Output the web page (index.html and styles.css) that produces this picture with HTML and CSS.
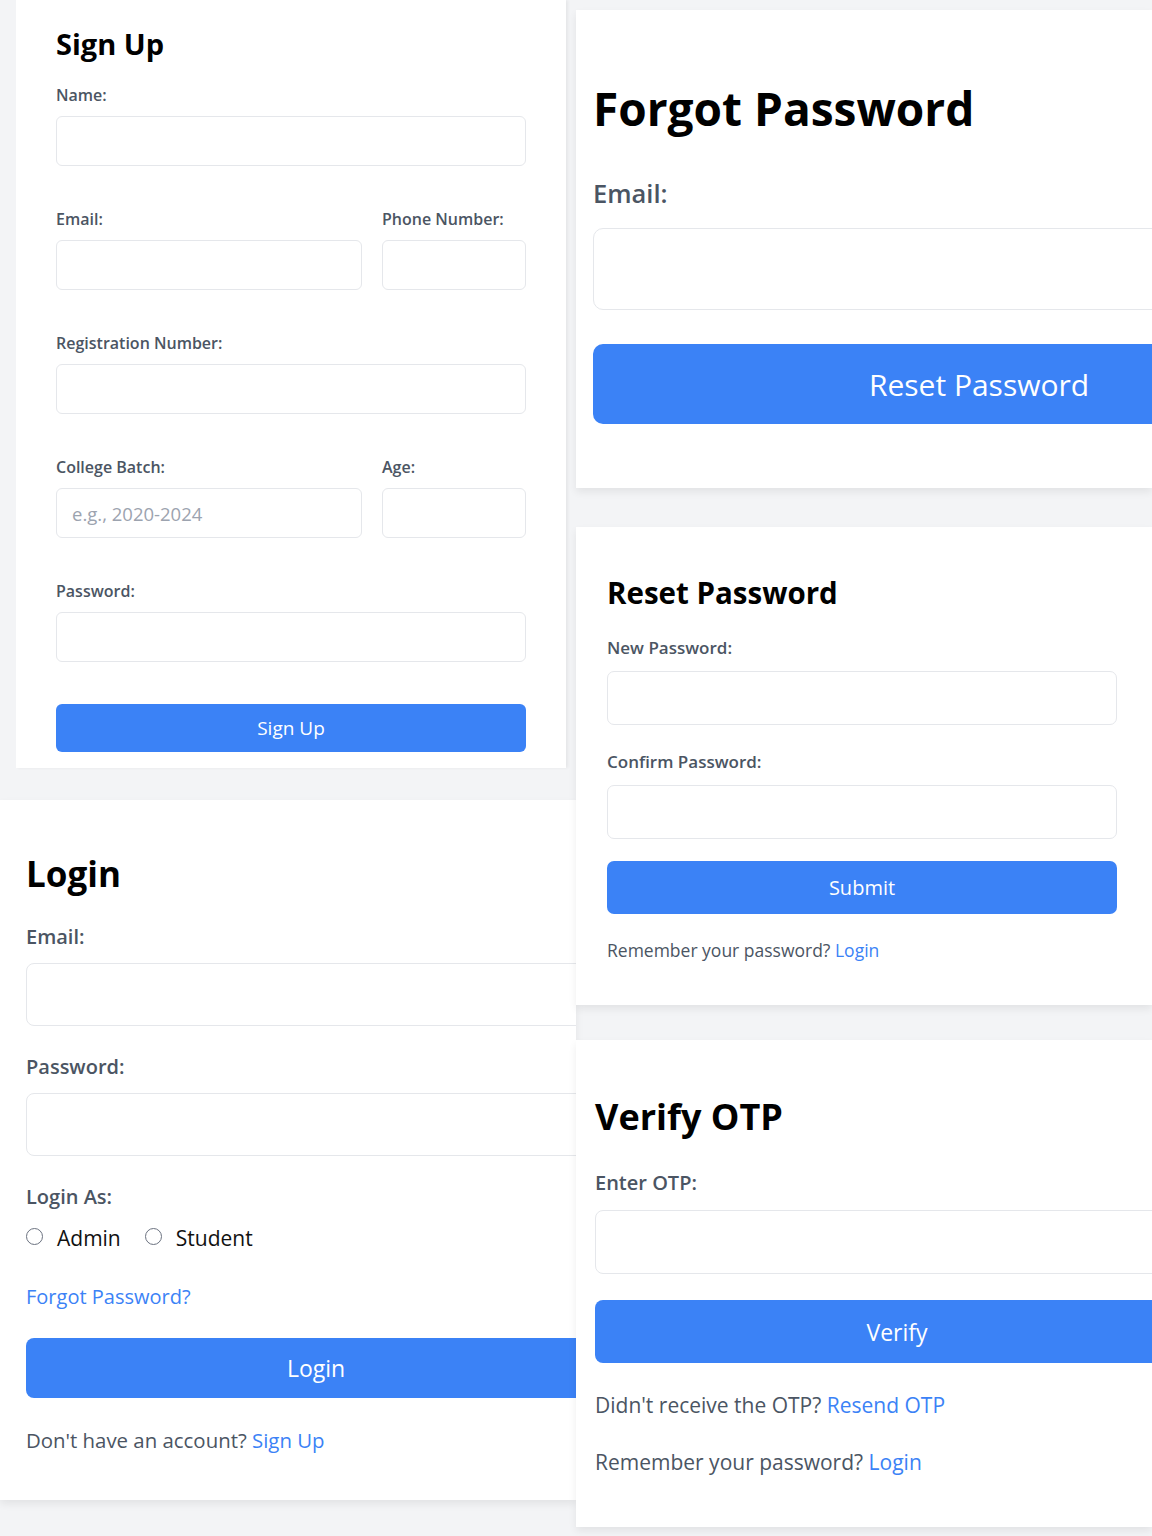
FILE: index.html
```html
<!DOCTYPE html>
<html lang="en">
<head>
<meta charset="utf-8">
<title>Auth screens</title>
<link rel="stylesheet" href="styles.css">
</head>
<body>
<div class="collage">
  <div class="col col-left">
    <section class="card signup">
      <h2 class="title">Sign Up</h2>
      <div class="group">
        <label class="label">Name:</label>
        <input class="input" type="text">
      </div>
      <div class="group row">
        <div class="cell">
          <label class="label">Email:</label>
          <input class="input" type="email">
        </div>
        <div class="cell">
          <label class="label">Phone Number:</label>
          <input class="input" type="text">
        </div>
      </div>
      <div class="group">
        <label class="label">Registration Number:</label>
        <input class="input" type="text">
      </div>
      <div class="group row">
        <div class="cell">
          <label class="label">College Batch:</label>
          <input class="input" type="text" placeholder="e.g., 2020-2024">
        </div>
        <div class="cell">
          <label class="label">Age:</label>
          <input class="input" type="text">
        </div>
      </div>
      <div class="group">
        <label class="label">Password:</label>
        <input class="input" type="password">
      </div>
      <button class="btn">Sign Up</button>
    </section>

    <section class="card login">
      <div class="form">
        <h2 class="title">Login</h2>
        <label class="label l-email">Email:</label>
        <input class="input" type="email">
        <label class="label l-next">Password:</label>
        <input class="input" type="password">
        <div class="label l-next">Login As:</div>
        <div class="radios">
          <label class="radio"><span class="dot"></span>Admin</label>
          <label class="radio"><span class="dot"></span>Student</label>
        </div>
        <a class="link forgot-link">Forgot Password?</a>
        <button class="btn">Login</button>
        <p class="note">Don't have an account? <a class="link">Sign Up</a></p>
      </div>
    </section>
  </div>

  <div class="col col-right">
    <section class="card forgot">
      <div class="form">
        <h2 class="title">Forgot Password</h2>
        <label class="label">Email:</label>
        <input class="input" type="email">
        <button class="btn">Reset Password</button>
      </div>
    </section>

    <section class="card reset">
      <div class="form">
        <h2 class="title">Reset Password</h2>
        <label class="label">New Password:</label>
        <input class="input" type="password">
        <label class="label l-next">Confirm Password:</label>
        <input class="input" type="password">
        <button class="btn">Submit</button>
        <p class="note">Remember your password? <a class="link">Login</a></p>
      </div>
    </section>

    <section class="card verify">
      <div class="form">
        <h2 class="title">Verify OTP</h2>
        <label class="label">Enter OTP:</label>
        <input class="input" type="text">
        <button class="btn">Verify</button>
        <p class="note">Didn't receive the OTP? <a class="link">Resend OTP</a></p>
        <p class="note note2">Remember your password? <a class="link">Login</a></p>
      </div>
    </section>
  </div>
</div>
</body>
</html>
```

FILE: styles.css
```css
* { box-sizing: border-box; }

html, body {
  margin: 0;
  padding: 0;
  background: #f3f4f6;
  font-family: "Open Sans", "Noto Sans", "Liberation Sans", sans-serif;
  color: #111827;
}

.collage {
  display: grid;
  grid-template-columns: 576px 576px;
  width: 1152px;
  height: 1536px;
  overflow: hidden;
}

.col {
  display: flex;
  flex-direction: column;
  min-width: 0;
}

.col-left { gap: 32px; }
.col-right { gap: 39px; padding-top: 10px; }

.card {
  background: #ffffff;
  overflow: hidden;
  box-shadow: 0 4px 8px rgba(0, 0, 0, 0.07);
}

.title {
  margin: 0;
  font-weight: 700;
  color: #000;
}

.label {
  display: block;
  color: #4b5563;
  font-weight: 600;
}

.input {
  display: block;
  width: 100%;
  border: 1px solid #e5e7eb;
  background: #fff;
  font-family: inherit;
  outline: none;
  margin: 0;
}

.input::placeholder { color: #9ca3af; }

.btn {
  display: block;
  width: 100%;
  border: 0;
  background: #3b82f6;
  color: #fff;
  font-family: inherit;
  font-weight: 400;
  padding: 0;
}

.link { color: #3b82f6; text-decoration: none; }

.note {
  margin: 0;
  color: #4b5563;
}

/* ---------- Sign Up ---------- */
.signup {
  margin-left: 16px;
  width: 550px;
  padding: 26px 40px 16px;
  box-shadow: 2px 0 3px rgba(0, 0, 0, 0.06);
}
.signup .title { font-size: 29px; line-height: 36px; }
.signup .group { margin-top: 43px; }
.signup .title + .group { margin-top: 23px; }
.signup .label { font-size: 16px; line-height: 20px; margin-bottom: 11px; }
.signup .input { height: 50px; border-radius: 6px; padding: 0 15px; font-size: 18.5px; }
.signup .row { display: grid; grid-template-columns: 306px 144px; column-gap: 20px; }
.signup .btn { margin-top: 42px; height: 48px; border-radius: 6px; font-size: 19px; }

/* ---------- Login ---------- */
.login {
  height: 700px;
  padding: 50px 0 0 26px;
}
.login .form { width: 580px; }
.login .title { font-size: 35px; line-height: 48px; }
.login .label { font-size: 20px; line-height: 28px; }
.login .l-email { margin-top: 25px; }
.login .l-next { margin-top: 27px; }
.login .input { margin-top: 12px; height: 63px; border-radius: 8px; }
.login .radios {
  margin-top: 13px;
  display: flex;
  gap: 24px;
  font-size: 21px;
  line-height: 28px;
  color: #111;
}
.login .radio { display: flex; align-items: center; gap: 14px; }
.login .dot {
  width: 17px;
  height: 17px;
  border: 1.5px solid #6b7280;
  border-radius: 50%;
  margin-top: -3px;
}
.login .forgot-link { display: block; margin-top: 31px; font-size: 20px; line-height: 28px; }
.login .btn { margin-top: 27px; height: 60px; border-radius: 8px; font-size: 23px; }
.login .note { margin-top: 28px; font-size: 20.4px; line-height: 28px; }

/* ---------- Forgot Password ---------- */
.forgot {
  height: 478px;
  padding: 70px 0 0 17px;
}
.forgot .form { width: 772px; }
.forgot .title { font-size: 46px; line-height: 56px; }
.forgot .label { margin-top: 40px; font-size: 25.5px; line-height: 34px; }
.forgot .input { margin-top: 18px; height: 82px; border-radius: 10px; }
.forgot .btn { margin-top: 34px; height: 80px; border-radius: 10px; font-size: 30px; }

/* ---------- Reset Password ---------- */
.reset {
  height: 478px;
  padding: 47px 0 0 31px;
}
.reset .form { width: 510px; }
.reset .title { font-size: 29.5px; line-height: 38px; }
.reset .label { margin-top: 24px; font-size: 17px; line-height: 24px; }
.reset .l-next { margin-top: 25px; }
.reset .input { margin-top: 11px; height: 54px; border-radius: 7px; }
.reset .btn { margin-top: 22px; height: 53px; border-radius: 7px; font-size: 20px; }
.reset .note { margin-top: 24px; font-size: 17.5px; line-height: 24px; }

/* ---------- Verify OTP ---------- */
.verify {
  height: 487px;
  margin-top: -4px;
  padding: 54px 0 0 19px;
}
.verify .form { width: 604px; }
.verify .title { font-size: 36px; line-height: 46px; }
.verify .label { margin-top: 29px; font-size: 20px; line-height: 28px; }
.verify .input { margin-top: 13px; height: 64px; border-radius: 8px; }
.verify .btn { margin-top: 26px; height: 63px; border-radius: 8px; font-size: 23px; }
.verify .note { margin-top: 28px; font-size: 21px; line-height: 28px; }
.verify .note2 { margin-top: 29px; }
```
